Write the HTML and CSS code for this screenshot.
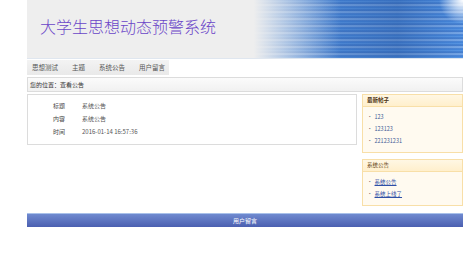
FILE: index.html
```html
<!DOCTYPE html>
<html lang="zh-CN">
<head>
    <meta charset="UTF-8">
    <title>查看公告</title>
    <link rel="stylesheet" href="styles.css">
</head>
<body>
    <div class="page">
        <div class="banner">
            <h1>大学生思想动态预警系统</h1>
        </div>
        <div class="nav">
            <ul>
                <li><a href="#">思想测试</a></li>
                <li><a href="#">主题</a></li>
                <li><a href="#">系统公告</a></li>
                <li><a href="#">用户留言</a></li>
            </ul>
        </div>
        <div class="crumb">您的位置：查看公告</div>
        <div class="main">
            <div class="content">
                <table class="detail">
                    <tr><th>标题</th><td>系统公告</td></tr>
                    <tr><th>内容</th><td>系统公告</td></tr>
                    <tr><th>时间</th><td>2016-01-14 16:57:36</td></tr>
                </table>
            </div>
            <div class="side">
                <div class="box">
                    <h3 class="strong">最新帖子</h3>
                    <ul>
                        <li>123</li>
                        <li>123123</li>
                        <li>221231231</li>
                    </ul>
                </div>
                <div class="box">
                    <h3>系统公告</h3>
                    <ul class="links">
                        <li><a href="#">系统公告</a></li>
                        <li><a href="#">系统上线了</a></li>
                    </ul>
                </div>
            </div>
        </div>
        <div class="footer">用户留言</div>
    </div>
</body>
</html>
```

FILE: styles.css
```css
body {
    margin: 0;
    background: #fff;
    font-family: "Noto Sans CJK SC", "Liberation Sans", sans-serif;
    font-size: 6px;
    color: #444;
}

.page {
    width: 436px;
    margin-left: 27px;
}

.banner {
    height: 58px;
    border-bottom: 1px solid #dfe6ef;
    background:
        linear-gradient(to right, #eeeeee 0, #eeeeee 52%, rgba(238, 238, 238, 0.6) 60%, rgba(238, 238, 238, 0) 72%),
        radial-gradient(circle at 100% 0, #ffffff 0, rgba(255, 255, 255, 0.6) 10px, rgba(255, 255, 255, 0) 24px),
        linear-gradient(to right, rgba(30, 70, 140, 0) 55%, rgba(30, 70, 140, 0.35) 85%, rgba(30, 70, 140, 0) 100%),
        repeating-linear-gradient(to bottom, #3d7fd6 0, #5e9be6 2px, #2f6cc4 3px, #8ab6ee 5px, #3a78cf 7px),
        #3a78cf;
}

.banner h1 {
    margin: 0;
    padding: 15px 0 0 13px;
    font-size: 16px;
    font-weight: 300;
    line-height: 22px;
    color: #6a45c8;
}

.nav {
    height: 15px;
    margin-top: 1px;
}

.nav ul {
    display: inline-flex;
    gap: 14px;
    height: 15px;
    margin: 0;
    padding: 0 4px 0 5px;
    list-style: none;
    background: linear-gradient(to bottom, #f3f3f3, #e9e9e9);
}

.nav li {
    font-size: 6.5px;
    line-height: 15px;
}

.nav a {
    color: #555;
    text-decoration: none;
}

.crumb {
    margin-top: 2px;
    height: 13px;
    padding-left: 2px;
    line-height: 13px;
    border: 1px solid #dcdcdc;
    background: linear-gradient(to bottom, #fbfbfb, #f1f1f1);
    color: #333;
}

.main {
    display: flex;
    gap: 5px;
    margin-top: 2px;
}

.content {
    width: 328px;
    height: 49px;
    border: 1px solid #dcdcdc;
}

.detail {
    margin: 4px 0 0 19px;
    border-collapse: collapse;
}

.detail th {
    width: 29px;
    padding: 0 0 0 6px;
    font-weight: normal;
    text-align: left;
    line-height: 13px;
}

.detail td {
    padding: 0;
    line-height: 13px;
    color: #555;
}

.side {
    display: flex;
    flex-direction: column;
    gap: 6px;
    width: 101px;
}

.box {
    border: 1px solid #f8dfa8;
    background: #fffaf0;
}

.box h3 {
    margin: 0;
    height: 11px;
    padding-left: 4px;
    line-height: 11px;
    font-size: 5.5px;
    font-weight: normal;
    color: #6b4a20;
    border-bottom: 1px solid #f8dfa8;
    background: linear-gradient(to bottom, #fff7e4, #ffefcc);
}

.box h3.strong {
    font-weight: bold;
    color: #4a3010;
}

.box ul {
    margin: 0;
    padding: 4px 0 5px 4px;
    list-style: none;
}

.box li {
    font-size: 5.5px;
    line-height: 12px;
    color: #3d5a96;
}

.box li::before {
    content: "·";
    margin-right: 2px;
    color: #777;
}

.links a {
    color: #2f4fa6;
}

.footer {
    margin-top: 7px;
    height: 13px;
    line-height: 13px;
    text-align: center;
    color: #fff;
    border-top: 1px solid #a9c1ea;
    background: linear-gradient(to bottom, #6f8ad0, #4b5fb0);
}
```
